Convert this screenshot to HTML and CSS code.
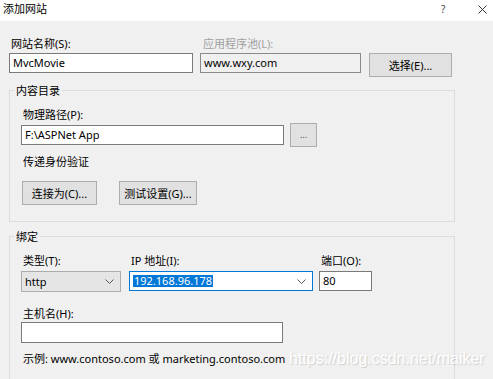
FILE: index.html
```html
<!DOCTYPE html>
<html lang="zh-CN">
<head>
    <meta charset="UTF-8">
    <title>添加网站</title>
    <link rel="stylesheet" href="styles.css">
</head>
<body>
    <div class="dialog">
        <div class="titlebar">
            <span class="title">添加网站</span>
            <span class="help">?</span>
            <span class="close">
                <svg width="9" height="9" viewBox="0 0 9 9"><path d="M0.5 0.5 L8.5 8.5 M8.5 0.5 L0.5 8.5" stroke="#333" stroke-width="1" fill="none"/></svg>
            </span>
        </div>

        <div class="content">
            <div class="site-row">
                <label class="lbl">网站名称(S):</label>
                <label class="lbl lbl-disabled">应用程序池(L):</label>
                <span></span>
                <div class="textbox">MvcMovie</div>
                <div class="textbox textbox-readonly">www.wxy.com</div>
                <button class="btn btn-select">选择(E)...</button>
            </div>

            <fieldset class="group">
                <legend>内容目录</legend>
                <label class="lbl">物理路径(P):</label>
                <div class="path-row">
                    <div class="textbox textbox-path">F:\ASPNet App</div>
                    <button class="btn btn-browse">...</button>
                </div>
                <div class="lbl auth-label">传递身份验证</div>
                <div class="auth-buttons">
                    <button class="btn btn-connect">连接为(C)...</button>
                    <button class="btn btn-test">测试设置(G)...</button>
                </div>
            </fieldset>

            <fieldset class="group group-binding">
                <legend>绑定</legend>
                <div class="binding-row">
                    <label class="lbl">类型(T):</label>
                    <label class="lbl">IP 地址(I):</label>
                    <label class="lbl">端口(O):</label>
                    <div class="combo combo-type">
                        <span>http</span>
                        <svg class="chevron" width="9" height="5" viewBox="0 0 9 5"><polyline points="0.5,0.5 4.5,4.5 8.5,0.5" stroke="#555" fill="none"/></svg>
                    </div>
                    <div class="combo combo-ip">
                        <span class="selected">192.168.96.178</span>
                        <svg class="chevron" width="9" height="5" viewBox="0 0 9 5"><polyline points="0.5,0.5 4.5,4.5 8.5,0.5" stroke="#555" fill="none"/></svg>
                    </div>
                    <div class="textbox textbox-port">80</div>
                </div>
                <label class="lbl host-label">主机名(H):</label>
                <div class="textbox textbox-host"></div>
                <div class="lbl example">示例: www.contoso.com 或 marketing.contoso.com</div>
            </fieldset>
        </div>

        <div class="watermark">https://blog.csdn.net/maiker</div>
    </div>
</body>
</html>
```

FILE: styles.css
```css
body {
    margin: 0;
    background: #f0f0f0;
    font-family: "Noto Sans", "Noto Sans CJK SC", sans-serif;
    font-size: 11px;
    color: #000;
}

.dialog {
    position: relative;
    width: 493px;
    height: 379px;
    overflow: hidden;
    background: #f0f0f0;
}

.titlebar {
    height: 21px;
    background: #fff;
    display: flex;
    align-items: center;
    padding: 0 6px 0 3px;
}

.title {
    flex: 1;
    font-size: 11px;
    line-height: 15px;
    margin-top: -4px;
}

.help {
    width: 10px;
    margin-right: 27px;
    margin-top: -4px;
    color: #444;
    font-size: 10px;
}

.close {
    display: flex;
    margin-top: -3px;
}

.content {
    padding: 15px 0 0 9px;
}

.lbl {
    display: block;
    line-height: 15px;
    height: 15px;
    color: #000;
    padding-left: 2px;
}

.lbl-disabled {
    color: #a0a0a0;
}

.textbox {
    box-sizing: border-box;
    height: 20px;
    background: #fff;
    border: 1px solid #7a7a7a;
    padding: 0 3px;
    line-height: 18px;
    white-space: nowrap;
}

.textbox-readonly {
    background: #f0f0f0;
    border-color: #8a8a8a;
}

.btn {
    box-sizing: border-box;
    height: 24px;
    background: #e1e1e1;
    border: 1px solid #adadad;
    font: inherit;
    color: #000;
    padding: 0;
}

.site-row {
    display: grid;
    grid-template-columns: 184px 161px 84px;
    column-gap: 7px;
    row-gap: 2px;
    align-items: start;
}

.site-row .lbl:nth-child(2) {
    margin-left: 1px;
}

.btn-select {
    margin-left: 1px;
}

.group {
    box-sizing: border-box;
    width: 446px;
    margin: 6px 0 0;
    padding: 9px 11px 16px 11px;
    border: 1px solid #dcdcdc;
    min-width: 0;
}

.group legend {
    padding: 0 2px;
    margin-left: -7px;
    line-height: 15px;
}

.path-row {
    display: flex;
    align-items: center;
    gap: 6px;
    margin-top: 1px;
}

.textbox-path {
    width: 263px;
}

.btn-browse {
    width: 27px;
    font-size: 9px;
    line-height: 10px;
    color: #555;
}

.auth-label {
    margin-top: 7px;
}

.auth-buttons {
    display: flex;
    gap: 22px;
    margin: 12px 0 0 1px;
}

.btn-connect {
    width: 75px;
}

.btn-test {
    width: 78px;
}

.group-binding {
    margin-top: 7px;
    padding-bottom: 40px;
}

.binding-row {
    display: grid;
    grid-template-columns: 100px 184px 51px;
    column-gap: 8px;
    row-gap: 3px;
}

.binding-row .lbl:nth-child(3) {
    margin-left: -2px;
}

.combo {
    box-sizing: border-box;
    height: 21px;
    display: flex;
    align-items: center;
    justify-content: space-between;
    padding: 0 6px 0 3px;
}

.combo-type {
    background: #e5e5e5;
    border: 1px solid #acacac;
}

.combo-ip {
    background: #fff;
    border: 1px solid #0078d7;
    height: 20px;
}

.selected {
    background: #0078d7;
    color: #fff;
    line-height: 12px;
    padding: 0 1px;
}

.textbox-port {
    margin-left: -2px;
}

.host-label {
    margin-top: 14px;
    margin-bottom: 1px;
}

.textbox-host {
    width: 262px;
    height: 21px;
}

.example {
    margin-top: 8px;
}

.watermark {
    position: absolute;
    left: 289px;
    top: 350px;
    font-family: "Liberation Sans", sans-serif;
    font-size: 16px;
    line-height: 18px;
    color: #fff;
    text-shadow: 1px 1px 1px rgba(0, 0, 0, 0.15);
}
```
